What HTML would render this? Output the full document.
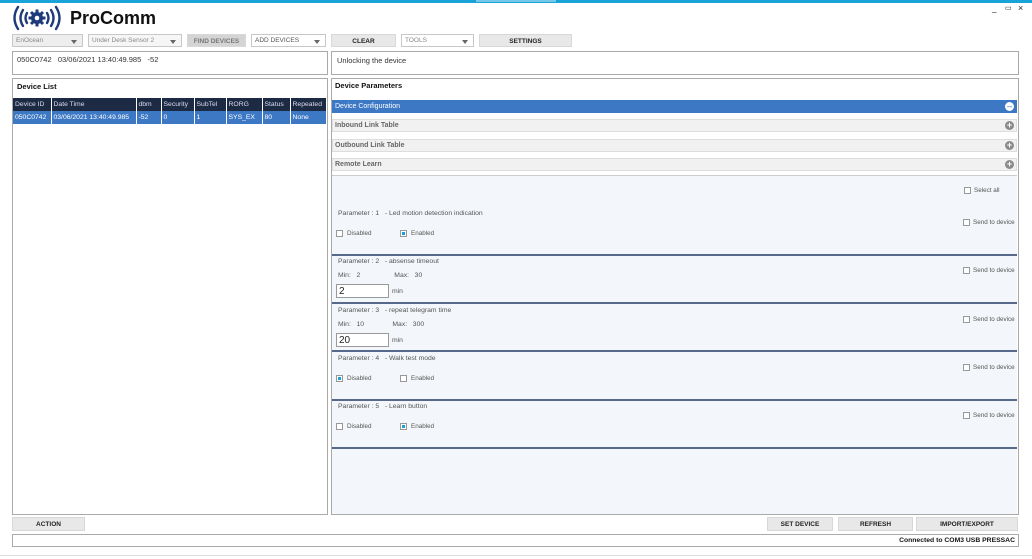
<!DOCTYPE html>
<html><head><meta charset="utf-8"><style>
*{box-sizing:border-box;margin:0;padding:0}
body{width:1032px;height:559px;background:#fff;font-family:"Liberation Sans",sans-serif;font-size:7px;color:#333;position:relative;overflow:hidden}
.a{position:absolute}
.btn{position:absolute;background:#e8e8e8;border:1px solid #d8d8d8;font-weight:bold;font-size:6.5px;text-align:center;line-height:13px;color:#222}
.cmb{position:absolute;background:#fff;border:1px solid #c8c8c8;color:#888;font-size:6.5px;line-height:12px;padding-left:3px}
.cmb:after{content:"";position:absolute;right:5px;top:5px;border-left:3.5px solid transparent;border-right:3.5px solid transparent;border-top:4px solid #666}
.box{position:absolute;border:1px solid #aaa;background:#fff}
table{border-collapse:collapse;font-size:6.8px}
td{padding:0 2px;height:13px;border-right:1px solid #fff;white-space:nowrap}
.acc{position:absolute;left:332px;width:685px;height:13px;background:#f1f1f1;border:1px solid #ddd;font-size:7px;line-height:11px;padding-left:2px;color:#666;font-weight:bold}
.plus{position:absolute;right:2px;top:1px;width:9px;height:9px;border-radius:50%;background:#8a8a8a;color:#fff;font-size:9px;line-height:9px;text-align:center}
.sep{position:absolute;left:332px;width:685px;height:2px;background:#56698a}
.cb{position:absolute;width:7px;height:7px;border:1px solid #999;background:#fff}
.cb.on:after{content:"";position:absolute;left:1px;top:1px;width:3px;height:3px;background:#18a0d8}
.t{position:absolute;font-size:6.8px;color:#555;white-space:nowrap}
.s{font-size:6.3px}
.inp{position:absolute;width:53px;height:14px;border:1px solid #999;background:#fff;font-size:10px;line-height:13px;padding-left:2px;color:#222}
</style></head><body>
<div class="a" style="left:0;top:0;width:1032px;height:3px;background:#1aa3d9"></div>
<div class="a" style="left:476px;top:0;width:80px;height:2px;background:#fff;opacity:.4"></div>
<svg class="a" style="left:11px;top:4px" width="52" height="28" viewBox="0 0 52 28">
<g fill="none" stroke="#1f3a7a" stroke-width="2.4" stroke-linecap="round">
<path d="M7 3 Q0 14 7 25"/><path d="M12 6 Q7 14 12 22"/><path d="M16 9 Q13 14 16 19"/>
<path d="M45 3 Q52 14 45 25"/><path d="M40 6 Q45 14 40 22"/><path d="M36 9 Q39 14 36 19"/></g>
<circle cx="26" cy="14" r="6" fill="#1f3a7a"/>
<g stroke="#1f3a7a" stroke-width="3"><path d="M26 5.5V22.5M17.5 14H34.5M20 8L32 20M32 8L20 20"/></g>
<circle cx="26" cy="14" r="2.3" fill="#fff"/></svg>
<div class="a" style="left:70px;top:8px;font-size:18px;font-weight:bold;color:#111">ProComm</div>
<div class="a" style="left:992px;top:4px;font-size:8px;color:#222">_</div>
<div class="a" style="left:1005px;top:4px;font-size:7px;color:#222">▭</div>
<div class="a" style="left:1018px;top:3px;font-size:9px;color:#222">×</div>

<div class="cmb" style="left:12px;top:34px;width:71px;height:13px;background:#eee">EnOcean</div>
<div class="cmb" style="left:88px;top:34px;width:94px;height:13px;background:#f6f6f6">Under Desk Sensor 2</div>
<div class="btn" style="left:187px;top:34px;width:59px;height:13px;background:#d4d4d4;color:#777">FIND DEVICES</div>
<div class="cmb" style="left:251px;top:34px;width:75px;height:13px;color:#555">ADD DEVICES</div>
<div class="btn" style="left:331px;top:34px;width:65px;height:13px">CLEAR</div>
<div class="cmb" style="left:401px;top:34px;width:73px;height:13px">TOOLS</div>
<div class="btn" style="left:479px;top:34px;width:93px;height:13px">SETTINGS</div>

<div class="box" style="left:12px;top:51px;width:316px;height:24px"><div class="t" style="left:4px;top:3px;font-size:7.5px;color:#333">050C0742 &nbsp; 03/06/2021 13:40:49.985 &nbsp; -52</div></div>
<div class="box" style="left:331px;top:51px;width:688px;height:24px"><div class="t" style="left:5px;top:4px;font-size:7.5px;color:#333">Unlocking the device</div></div>

<div class="box" style="left:12px;top:78px;width:316px;height:437px">
<div class="t" style="left:4px;top:3px;font-weight:bold;color:#111;font-size:7.5px">Device List</div>
<table class="a" style="left:0;top:19px;width:314px">
<tr style="background:#1c2a44;color:#dde"><td style="width:38px">Device ID</td><td style="width:85px">Date Time</td><td style="width:25px">dbm</td><td style="width:33px">Security</td><td style="width:32px">SubTel</td><td style="width:36px">RORG</td><td style="width:28px">Status</td><td>Repeated</td></tr>
<tr style="background:#3d78c4;color:#fff"><td>050C0742</td><td>03/06/2021 13:40:49.985</td><td>-52</td><td>0</td><td>1</td><td>SYS_EX</td><td>80</td><td>None</td></tr>
</table></div>

<div class="box" style="left:331px;top:78px;width:688px;height:437px"></div>
<div class="t" style="left:335px;top:81px;font-weight:bold;color:#111;font-size:7.5px">Device Parameters</div>
<div class="acc" style="top:100px;background:#3d78c4;border-color:#3d78c4;color:#fff;font-weight:normal">Device Configuration<div class="plus" style="background:#fff;color:#3d78c4;width:9px">–</div></div>
<div class="acc" style="top:119px">Inbound Link Table<div class="plus">+</div></div>
<div class="acc" style="top:139px">Outbound Link Table<div class="plus">+</div></div>
<div class="acc" style="top:158px">Remote Learn<div class="plus">+</div></div>
<div class="a" style="left:332px;top:175px;width:685px;height:339px;background:#f3f6fa;border-top:1px solid #ccc"></div>
<div class="sep" style="top:254px"></div><div class="sep" style="top:302px"></div><div class="sep" style="top:350px"></div><div class="sep" style="top:399px"></div><div class="sep" style="top:447px"></div>

<div class="cb" style="left:964px;top:187px"></div><div class="t s" style="left:974px;top:187px">Select all</div>
<div class="t" style="left:338px;top:210px">Parameter : 1 &nbsp; - Led motion detection indication</div>
<div class="cb" style="left:336px;top:230px"></div><div class="t s" style="left:347px;top:230px">Disabled</div>
<div class="cb on" style="left:400px;top:230px"></div><div class="t s" style="left:411px;top:230px">Enabled</div>
<div class="cb" style="left:963px;top:219px"></div><div class="t s" style="left:973px;top:219px">Send to device</div>

<div class="t" style="left:338px;top:258px">Parameter : 2 &nbsp; - absense timeout</div>
<div class="t" style="left:338px;top:272px">Min: &nbsp; 2 &nbsp;&nbsp;&nbsp;&nbsp;&nbsp;&nbsp;&nbsp;&nbsp;&nbsp;&nbsp;&nbsp;&nbsp;&nbsp;&nbsp;&nbsp;&nbsp; Max: &nbsp; 30</div>
<div class="inp" style="left:336px;top:284px">2</div><div class="t" style="left:392px;top:288px">min</div>
<div class="cb" style="left:963px;top:267px"></div><div class="t s" style="left:973px;top:267px">Send to device</div>

<div class="t" style="left:338px;top:307px">Parameter : 3 &nbsp; - repeat telegram time</div>
<div class="t" style="left:338px;top:321px">Min: &nbsp; 10 &nbsp;&nbsp;&nbsp;&nbsp;&nbsp;&nbsp;&nbsp;&nbsp;&nbsp;&nbsp;&nbsp;&nbsp;&nbsp; Max: &nbsp; 300</div>
<div class="inp" style="left:336px;top:333px">20</div><div class="t" style="left:392px;top:337px">min</div>
<div class="cb" style="left:963px;top:316px"></div><div class="t s" style="left:973px;top:316px">Send to device</div>

<div class="t" style="left:338px;top:355px">Parameter : 4 &nbsp; - Walk test mode</div>
<div class="cb on" style="left:336px;top:375px"></div><div class="t s" style="left:347px;top:375px">Disabled</div>
<div class="cb" style="left:400px;top:375px"></div><div class="t s" style="left:411px;top:375px">Enabled</div>
<div class="cb" style="left:963px;top:364px"></div><div class="t s" style="left:973px;top:364px">Send to device</div>

<div class="t" style="left:338px;top:403px">Parameter : 5 &nbsp; - Learn button</div>
<div class="cb" style="left:336px;top:423px"></div><div class="t s" style="left:347px;top:423px">Disabled</div>
<div class="cb on" style="left:400px;top:423px"></div><div class="t s" style="left:411px;top:423px">Enabled</div>
<div class="cb" style="left:963px;top:412px"></div><div class="t s" style="left:973px;top:412px">Send to device</div>

<div class="btn" style="left:12px;top:517px;width:73px;height:14px">ACTION</div>
<div class="btn" style="left:767px;top:517px;width:66px;height:14px">SET DEVICE</div>
<div class="btn" style="left:838px;top:517px;width:75px;height:14px">REFRESH</div>
<div class="btn" style="left:916px;top:517px;width:102px;height:14px">IMPORT/EXPORT</div>
<div class="box" style="left:12px;top:534px;width:1007px;height:13px"><div class="t" style="right:3px;top:2px;font-weight:bold;color:#111">Connected to COM3 USB PRESSAC</div></div>
<div class="a" style="left:0;top:555px;width:1032px;height:1px;background:#ddd"></div>
</body></html>
